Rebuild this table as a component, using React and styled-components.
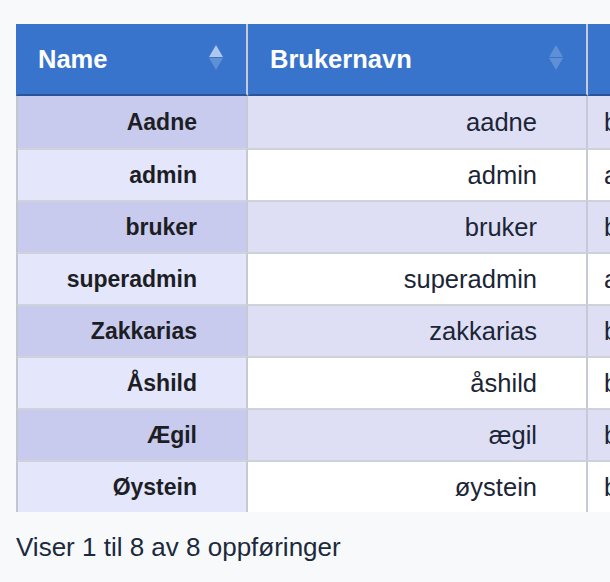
import React from 'react'
import styled, {createGlobalStyle} from 'styled-components'

const GlobalStyle = createGlobalStyle`
  html, body {
    margin: 0;
    padding: 0;
    background: #f8f9fb;
    overflow: hidden;
  }
  body {
    font-family: "Liberation Sans", Arial, sans-serif;
  }
`

const Page = styled.main`
  padding: 24px 0 0 16px;
`
const TableWrap = styled.div`
  overflow: hidden;
`
const Table = styled.table`
  border-collapse: separate;
  border-spacing: 0;
  table-layout: fixed;
  width: 772px;
`
const HeadCell = styled.th`
  box-sizing: border-box;
  width: ${p => p.$w}px;
  height: 72px;
  padding: 0;
  background: #3874cb;
  color: #fff;
  font-size: 25.5px;
  font-weight: 700;
  text-align: left;
  border-left: 2px solid #3874cb;
  border-right: 2px solid #c6cad4;
  border-bottom: 2px solid #2b5497;
`
const HeadInner = styled.div`
  display: flex;
  align-items: center;
  justify-content: space-between;
  padding: 0 23px 0 20px;
`
const SortIcon = styled.span`
  display: flex;
  flex-direction: column;
  gap: 1px;
  margin-top: -3px;
`
const Arrow = styled.span`
  width: 0;
  height: 0;
  border-left: 7px solid transparent;
  border-right: 7px solid transparent;
  ${p => p.$up
    ? `border-bottom: 12px solid ${p.$on ? 'rgba(255,255,255,0.6)' : 'rgba(255,255,255,0.2)'};`
    : `border-top: 12px solid rgba(255,255,255,0.2);`}
`
const Cell = styled.td`
  box-sizing: border-box;
  height: 52px;
  padding: 1px 49px 0 16px;
  white-space: nowrap;
  overflow: hidden;
  border-right: 2px solid #c6cad4;
  border-top: ${p => (p.$first ? 'none' : '2px solid #d0d2da')};
  border-left: ${p => (p.$lead ? '2px solid #c3c6cf' : 'none')};
  text-align: ${p => p.$align || 'right'};
  font-size: ${p => (p.$lead ? '23px' : '25.5px')};
  font-weight: ${p => (p.$lead ? 700 : 400)};
  color: ${p => (p.$lead ? '#1d1e24' : '#1b2536')};
  background: ${p => {
    if (p.$lead) return p.$odd ? '#c8cbee' : '#e4e6fc'
    return p.$odd ? '#dedff5' : '#ffffff'
  }};
`
const Footer = styled.p`
  margin: 20px 0 0;
  font-size: 26px;
  color: #1b2a3d;
`

const users = [
  {name: 'Aadne', user: 'aadne', role: 'bruker'},
  {name: 'admin', user: 'admin', role: 'admin'},
  {name: 'bruker', user: 'bruker', role: 'bruker'},
  {name: 'superadmin', user: 'superadmin', role: 'admin'},
  {name: 'Zakkarias', user: 'zakkarias', role: 'bruker'},
  {name: 'Åshild', user: 'åshild', role: 'bruker'},
  {name: 'Ægil', user: 'ægil', role: 'bruker'},
  {name: 'Øystein', user: 'øystein', role: 'bruker'}
]

const columns = [
  {title: 'Name', w: 232, sorted: true},
  {title: 'Brukernavn', w: 340},
  {title: 'Rolle', w: 200}
]

export default function App() {
  return (
    <Page>
      <GlobalStyle />
      <TableWrap>
        <Table>
          <thead>
            <tr>
              {columns.map(col => (
                <HeadCell key={col.title} $w={col.w}>
                  <HeadInner>
                    <span>{col.title}</span>
                    <SortIcon>
                      <Arrow $up $on={col.sorted} />
                      <Arrow />
                    </SortIcon>
                  </HeadInner>
                </HeadCell>
              ))}
            </tr>
          </thead>
          <tbody>
            {users.map((u, i) => (
              <tr key={u.user}>
                <Cell as="th" scope="row" $lead $odd={i % 2 === 0} $first={i === 0}>{u.name}</Cell>
                <Cell $odd={i % 2 === 0} $first={i === 0}>{u.user}</Cell>
                <Cell $odd={i % 2 === 0} $first={i === 0} $align="left">{u.role}</Cell>
              </tr>
            ))}
          </tbody>
        </Table>
      </TableWrap>
      <Footer>Viser 1 til 8 av 8 oppføringer</Footer>
    </Page>
  )
}
